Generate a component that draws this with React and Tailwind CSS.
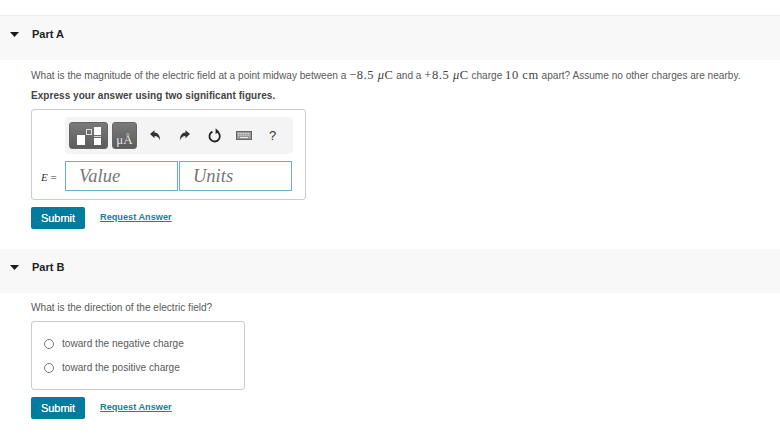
const Caret = () => (
  <svg width="9" height="5" viewBox="0 0 9 5" className="block">
    <path d="M0 0H9L4.5 5Z" fill="#1a1a1a" />
  </svg>
);

const PartHeader = ({ title, className }) => (
  <div className={`flex h-[44px] items-center bg-[#f8f8f8] pb-[8px] pl-[10px] ${className}`}>
    <Caret />
    <span className="ml-[13px] text-[11px] font-bold text-[#222]">{title}</span>
  </div>
);

const Actions = () => (
  <div className="flex items-center">
    <button className="flex h-[22px] w-[54px] items-center justify-center rounded-[2px] bg-[#007c9e] text-[11px] font-medium text-white [text-shadow:0_0_0.5px_#fff]">
      Submit
    </button>
    <a className="mb-[1px] ml-[15px] text-[9.2px] font-bold text-[#1a7f9f] underline">Request Answer</a>
  </div>
);

const Mat = ({ children }) => (
  <span className="font-['Liberation_Serif',serif] text-[12.5px] tracking-[0.55px] text-[#444]">{children}</span>
);

const Mu = () => <i>μ</i>;

const TemplatesIcon = () => (
  <svg width="24" height="18" viewBox="0 0 24 18">
    <rect x="0" y="8" width="8" height="10" fill="#fff" />
    <rect x="9.5" y="2.5" width="5" height="5" fill="none" stroke="#ddd" strokeWidth="1" />
    <rect x="17" y="0" width="7" height="8" fill="#fff" />
    <rect x="17" y="9" width="7" height="1" fill="#ddd" />
    <rect x="17" y="11" width="7" height="7" fill="#fff" />
  </svg>
);

const UndoIcon = ({ flip }) => (
  <svg width="12" height="11" viewBox="0 0 11 11" className={flip ? "-scale-x-100" : ""}>
    <path d="M0.5 4L5 0.2V2.6C8.5 2.8 10.6 5.5 10.6 10.4C9.6 7.8 7.8 6.2 5 6.1V8.2Z" fill="#333" />
  </svg>
);

const ResetIcon = () => (
  <svg width="14" height="15" viewBox="0 0 14 15">
    <path d="M8.4 3.4A5.2 5.2 0 1 1 4.4 3.6" fill="none" stroke="#222" strokeWidth="1.8" />
    <path d="M7.6 0.2L11 3.4L7.6 6Z" fill="#222" />
  </svg>
);

const KeyboardIcon = () => (
  <svg width="16" height="9" viewBox="0 0 16 9">
    <rect x="0.5" y="0.5" width="15" height="8" fill="#999" stroke="#666" />
    <path d="M2 2.5H14M2 4.2H14" stroke="#eee" strokeWidth="0.9" strokeDasharray="1 0.7" />
    <path d="M4 6.5H12" stroke="#eee" strokeWidth="0.9" />
  </svg>
);

const Radio = ({ label }) => (
  <div className="flex h-[24px] items-center">
    <span className="h-[10px] w-[10px] rounded-full border border-[#777] bg-white" />
    <span className="ml-[8px] text-[10.1px] text-[#5a5a5a]">{label}</span>
  </div>
);

export default function App() {
  return (
    <div className="h-[440px] w-[780px] overflow-hidden bg-white pt-[15px] font-['Liberation_Sans',Arial,sans-serif]">
      <div className="h-[1px] bg-[#ececec]" />
      <PartHeader title="Part A" />

      <div className="pl-[31px]">
        <p className="mt-[7px] h-[16px] whitespace-nowrap text-[10.1px] leading-[16px] text-[#5a5a5a]">
          What is the magnitude of the electric field at a point midway between a <Mat>−8.5 <Mu />C</Mat> and a{" "}
          <Mat>+8.5 <Mu />C</Mat> charge <Mat>10 cm</Mat> apart? Assume no other charges are nearby.
        </p>
        <p className="mt-[5px] h-[16px] text-[10px] font-bold leading-[16px] tracking-[0.05px] text-[#444]">
          Express your answer using two significant figures.
        </p>

        <div className="mt-[5px] h-[91px] w-[275px] rounded-[3px] border border-[#ccc] pl-[33px] pt-[7px]">
          <div className="flex h-[37px] w-[228px] items-center rounded-[4px] bg-[#f4f4f4] pl-[4px]">
            <div className="flex h-[27px] w-[39px] items-center justify-center rounded-[3px] border border-[#666] bg-gradient-to-b from-[#7a7a7a] to-[#5c5c5c]">
              <TemplatesIcon />
            </div>
            <div className="ml-[4px] flex h-[27px] w-[25px] items-end justify-center rounded-[3px] border border-[#666] bg-gradient-to-b from-[#7a7a7a] to-[#5c5c5c] pb-[1px] font-['Liberation_Serif',serif] text-[13px] leading-[15px] text-[#e4e4e4]">
              μÅ
            </div>
            <div className="ml-[12px]"><UndoIcon /></div>
            <div className="ml-[18px]"><UndoIcon flip /></div>
            <div className="ml-[17px]"><ResetIcon /></div>
            <div className="ml-[14px]"><KeyboardIcon /></div>
            <span className="ml-[17px] text-[13px] text-[#333]">?</span>
          </div>
          <div className="relative mt-[7px] flex gap-[1px]">
            <span className="absolute left-[-24px] top-[8px] font-['Liberation_Serif',serif] text-[11px] text-[#333]">
              <i>E</i> =
            </span>
            <div className="flex h-[30px] w-[113px] items-center border border-[#6cb0c6] pl-[13px] pt-[1px] font-['Liberation_Serif',serif] text-[18.5px] italic text-[#777]">
              Value
            </div>
            <div className="flex h-[30px] w-[113px] items-center border border-[#6cb0c6] pl-[13px] pt-[1px] font-['Liberation_Serif',serif] text-[18.5px] italic text-[#777]">
              Units
            </div>
          </div>
        </div>

        <div className="mt-[7px]"><Actions /></div>
      </div>

      <PartHeader title="Part B" className="mt-[20px]" />

      <div className="pl-[31px]">
        <p className="mt-[7px] h-[16px] text-[10.1px] leading-[16px] text-[#5a5a5a]">
          What is the direction of the electric field?
        </p>
        <div className="mt-[5px] flex h-[69px] w-[214px] flex-col justify-center rounded-[3px] border border-[#ccc] pl-[12px]">
          <Radio label="toward the negative charge" />
          <Radio label="toward the positive charge" />
        </div>
        <div className="mt-[7px]"><Actions /></div>
      </div>
    </div>
  );
}
